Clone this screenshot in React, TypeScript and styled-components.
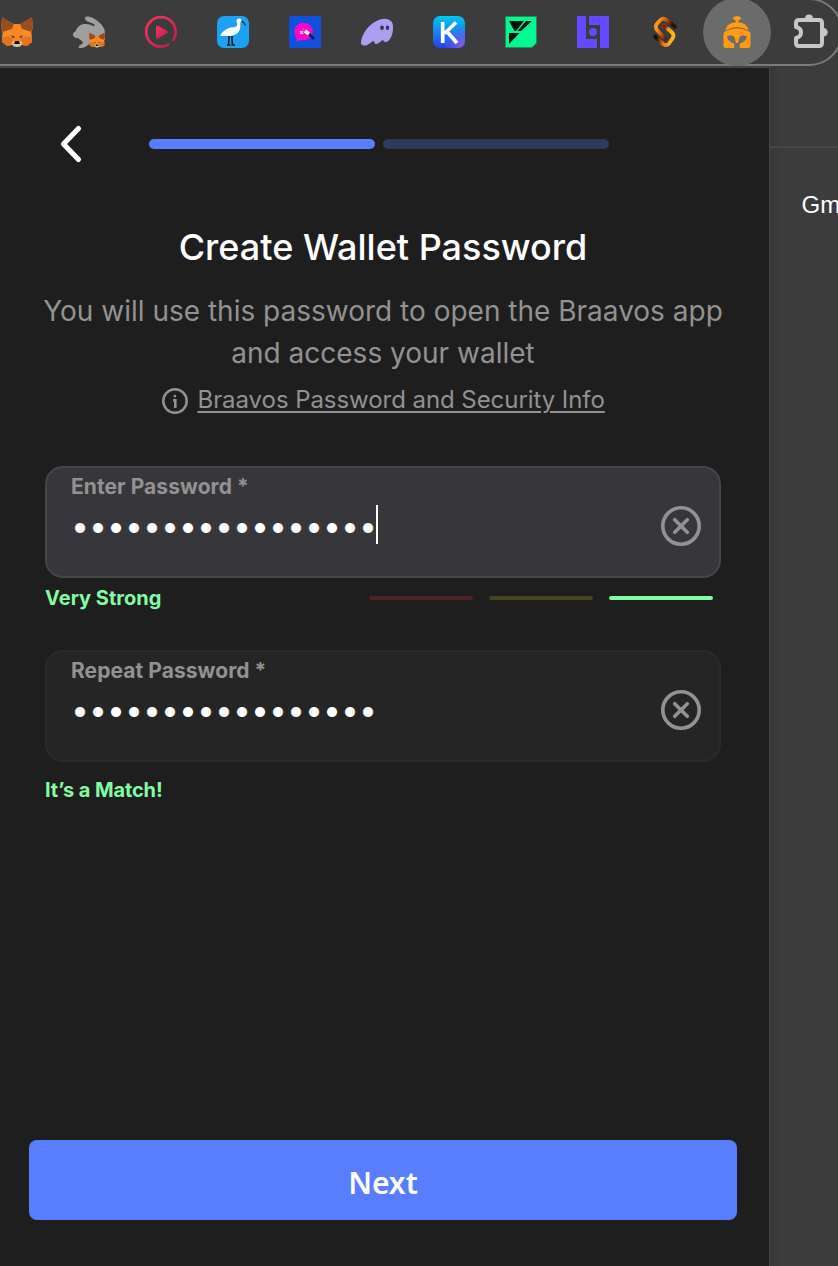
import React from "react";
import styled, { createGlobalStyle } from "styled-components";

const Global = createGlobalStyle`
  * { box-sizing: border-box; }
  html, body { margin: 0; background: #3c3c3c; }
  body { font-family: Inter, "Liberation Sans", sans-serif; color: #fff; }
`;

const Page = styled.div`
  width: 838px;
  height: 1266px;
  overflow: hidden;
  display: flex;
  flex-direction: column;
  background: #3c3c3c;
`;

const ToolbarClip = styled.header`
  height: 67px;
  flex: none;
  overflow: hidden;
`;

const Toolbar = styled.div`
  width: 845px;
  height: 68px;
  margin: -2px 0 0 -2px;
  border: 2px solid #7b7b7b;
  border-radius: 0 34px 34px 0;
  display: flex;
  align-items: center;
  gap: 40px;
  padding-left: 1px;
`;

const Extension = styled.div<{ $active?: boolean }>`
  flex: none;
  display: flex;
  align-items: center;
  justify-content: center;
  width: ${(p) => (p.$active ? 68 : 32)}px;
  height: ${(p) => (p.$active ? 68 : 32)}px;
  margin: ${(p) => (p.$active ? "-2px -18px" : "0")};
  border-radius: ${(p) => (p.$active ? "50%" : "0")};
  background: ${(p) => (p.$active ? "#6b6b6b" : "transparent")};
  svg { display: block; flex: none; overflow: visible; }
`;

const ExtensionsMenu = styled(Extension)`
  margin-left: 2px;
`;

const Body = styled.div`
  flex: 1;
  display: flex;
`;

const Popup = styled.main`
  width: 770px;
  flex: none;
  display: flex;
  flex-direction: column;
  background: #1e1e1e;
  border-top: 1px solid #484848;
  border-right: 1px solid #484848;
`;

const Behind = styled.aside`
  flex: 1;
  overflow: hidden;
  background: linear-gradient(to right, #373737, #3c3c3c 10px);
`;

const BehindBar = styled.div`
  height: 81px;
  border-bottom: 2px solid #464646;
`;

const BehindLink = styled.div`
  padding: 43px 0 0 31.5px;
  font: 24px/28px "Liberation Sans", Arial, sans-serif;
  white-space: nowrap;
`;

const StepHeader = styled.div`
  display: flex;
  align-items: center;
  height: 40px;
  margin-top: 56px;
  padding-left: 58px;
`;

const Steps = styled.div`
  display: flex;
  gap: 8px;
  margin-left: 65px;
`;

const Step = styled.div<{ $done?: boolean }>`
  width: 226px;
  height: 10px;
  border-radius: 5px;
  background: ${(p) => (p.$done ? "#587eff" : "#2f395c")};
`;

const Title = styled.h1`
  margin: 61px 0 0 -3px;
  font-size: 36px;
  line-height: 44px;
  font-weight: 500;
  text-align: center;
`;

const Lead = styled.p`
  margin: 21px 0 0 -3px;
  font-size: 28px;
  line-height: 42px;
  font-weight: 400;
  text-align: center;
  color: #929292;
`;

const InfoLine = styled.div`
  display: flex;
  align-items: center;
  height: 32px;
  margin-top: 10px;
  padding-left: 162px;
  gap: 9.5px;
  color: #929292;
  svg { display: block; position: relative; top: 1px; }
`;

const InfoLink = styled.a`
  font-size: 24px;
  line-height: 32px;
  letter-spacing: -0.06px;
  text-decoration: underline;
  text-decoration-thickness: 2px;
  text-underline-offset: 3px;
`;

const Form = styled.div`
  padding: 0 48px 0 45px;
  margin-top: 50px;
`;

const Field = styled.div<{ $focus?: boolean }>`
  width: 676px;
  height: 112px;
  border-radius: 18px;
  border: 2px solid ${(p) => (p.$focus ? "#464646" : "#2a2a2a")};
  background: ${(p) => (p.$focus ? "#37363b" : "#252525")};
  display: flex;
  align-items: center;
  justify-content: space-between;
  padding: 0 18px 0 24px;
  color: #929292;
  > svg { margin-top: 8px; }
`;

const FieldText = styled.div`
  align-self: flex-start;
  padding-top: 5px;
`;

const Label = styled.div`
  font-size: 21px;
  line-height: 28px;
  font-weight: 700;
  letter-spacing: 0.06px;
`;

const Value = styled.div`
  display: flex;
  align-items: center;
  height: 39px;
  margin-top: 4px;
  color: #fff;
`;

const Bullets = styled.span`
  display: flex;
  width: 305px;
  padding-top: 2px;
  font: 32px/39px Inter, sans-serif;
`;

const Bullet = styled.span`
  width: 18px;
  flex: none;
  display: flex;
  justify-content: center;
`;

const Caret = styled.span`
  width: 2px;
  height: 39px;
  background: #fff;
`;

const Strength = styled.div`
  display: flex;
  align-items: center;
  justify-content: space-between;
  height: 40px;
  padding-right: 8px;
  margin-bottom: 32px;
`;

const Status = styled.div`
  font-size: 20px;
  line-height: 28px;
  font-weight: 700;
  color: #83fba1;
`;

const Meter = styled.div`
  display: flex;
  gap: 16px;
`;

const MeterBar = styled.div<{ $color: string }>`
  width: 104px;
  height: 4px;
  border-radius: 2px;
  background: ${(p) => p.$color};
`;

const Match = styled(Status)`
  margin-top: 14px;
  letter-spacing: -0.1px;
`;

const NextButton = styled.button`
  width: 708px;
  height: 80px;
  margin: auto 0 46px 29px;
  border: 0;
  border-radius: 8px;
  background: #587eff;
  color: #fff;
  font: 600 30px/40px "Noto Sans", sans-serif;
  padding: 6px 0 0;
`;

const FoxShapes = () => (
  <>
    <path d="M1 2 13 8H19L31 2 32 11 30 18 31 26 26 30 20 29H12L6 30 1 26 2 18 0 11Z" fill="#f38120" />
    <path d="M1 1 13 8 11 13 2 16 0 11ZM31 1 19 8 21 13 30 16 32 11Z" fill="#984e22" />
    <path d="M13 8H19L21 14 20 25H12L11 14Z" fill="#fb8521" />
    <path d="M2 16 11 13 12 20 1 21ZM30 16 21 13 20 20 31 21Z" fill="#f98b28" />
    <path d="M1 21 10 21 12 25 6 30 1 26ZM31 21 22 21 20 25 26 30 31 26Z" fill="#e2731f" />
    <path d="M10 19 14 21 12 22ZM22 19 18 21 20 22Z" fill="#443329" />
    <path d="M11 26 13 25H19L21 26 20 30 17 31H15L12 30Z" fill="#d5c3b2" />
    <path d="M14 25H18L19 28H13Z" fill="#15161a" />
  </>
);

const Fox = () => (
  <svg width="32" height="32" viewBox="0 0 32 32"><FoxShapes /></svg>
);

const Rabbit = () => (
  <svg width="32" height="32" viewBox="0 0 32 32">
    <path d="M12 2C12 0 16 0 20 2 27 6 32 11 32 17V24H18C18 27 14 31 9 32H6C5 31 6 29 9 28 10 27 10 26 9 25 7 24 6 22 4 22 1 22 0 20 0 18.500 0 17 1 16 2.500 15.500 4 10.500 8 8 12 8 16 8 18 8.800 20.500 10.300L22 9C20 7.200 17 6.500 14.500 5.500 12.500 4.500 12 3.500 12 2Z" fill="#9f9f9f" />
    <g transform="translate(16 16) scale(.5)"><FoxShapes /></g>
  </svg>
);

const Play = () => (
  <svg width="32" height="32" viewBox="0 0 32 32">
    <defs>
      <linearGradient id="play" x1="0" y1="0" x2="1" y2="1">
        <stop stopColor="#fc3360" /><stop offset="1" stopColor="#b31f50" />
      </linearGradient>
    </defs>
    <path d="M24 28.300A14.700 14.700 0 1 1 29 23.500" transform="translate(-.7 .3)" fill="none" stroke="url(#play)" strokeWidth="2.800" strokeLinecap="round" />
    <path d="M11 11.300Q11 8.600 13.500 10L22 14.700Q24 16 22 17.200L13.500 22.200Q11 23.600 11 21Z" fill="url(#play)" />
  </svg>
);

const Ibis = () => (
  <svg width="32" height="32" viewBox="0 0 32 32">
    <rect width="32" height="32" rx="7" fill="#1da1f2" />
    <path d="M3 20C6 14 12 11 18 11 20.500 10 20.500 9 20 7 18.500 4 21 1.500 24 3 25 4 25 5 24 6 22.500 7 24 9 23 13 21.500 17.500 18 19.500 13 20 10 20 6 20 3 20Z" fill="#fff" />
    <path d="M24.500 5Q27 6 28.500 9.500" fill="none" stroke="#14354d" strokeWidth="1.400" />
    <path d="M12 20V23L11.500 28.500M15 20V23L15.500 28.500M10 29H13.500M14.500 29H18" fill="none" stroke="#0c1822" strokeWidth="1.600" />
  </svg>
);

const Chat = () => (
  <svg width="32" height="32" viewBox="0 0 32 32">
    <rect width="32" height="32" fill="#1050dc" />
    <path d="M7 25C8 23 7 22 6.500 20A9.300 8.800 0 1 1 12 24C10 25 9 25 7 25Z" fill="#fc04c9" />
    <path d="m11 15 3 3m0-3-3 3" stroke="#ffc0f0" strokeWidth="1.600" />
    <circle cx="14.500" cy="13" r=".8" fill="#fd89df" />
    <path d="m19 17 6 6" stroke="#19195a" strokeWidth="3" />
    <path d="m16 15 4 3" stroke="#fff" strokeWidth="3.500" />
  </svg>
);

const Ghost = () => (
  <svg width="32" height="32" viewBox="0 0 32 32">
    <path d="M0 27C0 19 8 7 19 3.500 27 1 33 5 32 12 32 19 29 25 25 26 23 26.500 22.500 24 21.500 24 19 26 17 28 15 28 13 28 13.500 25 12.500 25 10 26 7 30 3 29.500 1 29 0 28.500 0 27Z" fill="#ab9ff2" />
    <ellipse cx="21" cy="11.700" rx="1.900" ry="2.200" fill="#3c315b" />
    <ellipse cx="26.500" cy="11.700" rx="1.700" ry="2.200" fill="#3c315b" />
  </svg>
);

const KeplrMark = () => (
  <svg width="32" height="32" viewBox="0 0 32 32">
    <defs>
      <linearGradient id="k1" x1="0" y1="0" x2="0" y2="1">
        <stop stopColor="#00c7f2" /><stop offset="1" stopColor="#2840e5" />
      </linearGradient>
      <radialGradient id="k2" cx="1" cy="1" r=".7">
        <stop stopColor="#9a5ce5" /><stop offset="1" stopColor="#7a60ec" stopOpacity="0" />
      </radialGradient>
    </defs>
    <rect width="32" height="32" rx="7" fill="url(#k1)" />
    <rect width="32" height="32" rx="7" fill="url(#k2)" />
    <path d="M9.700 6V27M23 6.500 11.500 17.500M13 14.500 24 27" fill="none" stroke="#fff" strokeWidth="3.700" />
  </svg>
);

const GreenMark = () => (
  <svg width="32" height="32" viewBox="0 0 32 32">
    <path d="M1 .5H31.500V27L27 31.500H.5V.5Z" fill="#00fa92" stroke="#238653" strokeWidth=".6" />
    <path d="M4 5H19L11 15H9.500ZM21 5H27L16 15H12.500ZM4 17H14.500L4 28Z" fill="#04130e" />
  </svg>
);

const PurpleMark = () => (
  <svg width="32" height="32" viewBox="0 0 32 32">
    <path d="M0 0H9V23H20V32H0ZM12 0H32V32H23V9H12Z" fill="#624bff" />
    <circle cx="16" cy="16" r="4" fill="#624bff" />
  </svg>
);

const OrangeMark = () => (
  <svg width="32" height="32" viewBox="0 0 32 32">
    <defs>
      <linearGradient id="s1" x1="0" y1="0" x2="1" y2=".35">
        <stop offset=".2" stopColor="#ff9412" /><stop offset=".5" stopColor="#c65506" /><stop offset=".85" stopColor="#2a1307" />
      </linearGradient>
      <linearGradient id="s2" x1="1" y1=".5" x2="0" y2=".4">
        <stop offset=".1" stopColor="#ffb31a" /><stop offset=".5" stopColor="#ed7b09" /><stop offset=".9" stopColor="#1f0e05" />
      </linearGradient>
    </defs>
    <g fill="none" strokeWidth="3.800" strokeLinecap="round" strokeLinejoin="round">
      <path d="M26 11 17.500 3.800Q14 1.500 11.500 4L7.800 7.800Q5.800 11 8 14L16 22.500" stroke="url(#s1)" />
      <path d="M6 20.500 14 28Q17.500 30.500 20 27.500L23.500 22.500Q25.500 19.500 23.500 17L19 13" stroke="url(#s2)" />
    </g>
    <circle cx="15" cy="10" r="2" fill="#4b1907" stroke="#b93909" />
  </svg>
);

const Helmet = () => (
  <svg width="32" height="32" viewBox="0 0 32 32">
    <g fill="#ff9c12">
      <path d="M11.500 2Q16-2 20.500 2L17.200 5V6.200C23 6.500 27 10 27.500 14.500Q16 7.500 4.500 14.500C5 10 9 6.500 14.800 6.200V5Z" />
      <path d="M3.500 15.800Q16 8.500 28.500 15.800Q29.500 16.500 29.500 18.500V29.500Q29.500 32 27 32H18.800V27.500C22.500 26.500 25.500 24 26 20.200 22.500 19 19.500 19.500 18.500 21.500L17 27H15L13.500 21.500C12.500 19.500 9.500 19 6 20.200 6.500 24 9.500 26.500 13.200 27.500V32H5Q2.500 32 2.500 29.500V18.500Q2.500 16.500 3.500 15.800Z" />
    </g>
  </svg>
);

const Puzzle = () => (
  <svg width="36" height="36" viewBox="0 0 36 36">
    <path d="M6 6H26Q29 6 29 9V29Q29 32 26 32H6Q3 32 3 29V24Q8 23 8 18.500 8 14 3 13V9Q3 6 6 6Z" fill="none" stroke="#c7c7c7" strokeWidth="4" strokeLinejoin="round" />
    <path d="M12 5.500V4.500A4 4 0 0 1 20 4.500V5.500ZM30 14H30.500A4.200 4.200 0 0 1 30.500 22.500H30Z" fill="#c7c7c7" />
  </svg>
);

const ClearIcon = () => (
  <svg width="40" height="40" viewBox="0 0 40 40" fill="none" stroke="#929292" strokeLinecap="round">
    <circle cx="20" cy="20" r="18.200" strokeWidth="3.600" />
    <path d="m13.700 13.700 12.600 12.600m0-12.600L13.700 26.300" strokeWidth="3.600" />
  </svg>
);

const BackIcon = () => (
  <svg width="26" height="40" viewBox="0 0 26 40" fill="none">
    <path d="M20.500 4.500 5.500 20l15 15.500" stroke="#fff" strokeWidth="5.200" strokeLinecap="round" strokeLinejoin="round" />
  </svg>
);

const InfoIcon = () => (
  <svg width="26" height="26" viewBox="0 0 26 26" fill="none" stroke="#929292">
    <circle cx="13" cy="13" r="11.700" strokeWidth="2.500" />
    <path d="M11 12.300H13.300V20" strokeWidth="2.600" />
    <circle cx="12.900" cy="8.200" r=".6" strokeWidth="1.600" />
  </svg>
);

const PASSWORD_LENGTH = 17;
const ICONS = [Fox, Rabbit, Play, Ibis, Chat, Ghost, KeplrMark, GreenMark, PurpleMark, OrangeMark];

const PasswordField = ({ label, focus }: { label: string; focus?: boolean }) => (
  <Field $focus={focus}>
    <FieldText>
      <Label>{label}</Label>
      <Value>
        <Bullets>
          {Array.from({ length: PASSWORD_LENGTH }, (_, i) => <Bullet key={i}>•</Bullet>)}
        </Bullets>
        {focus && <Caret />}
      </Value>
    </FieldText>
    <ClearIcon />
  </Field>
);

export default function App() {
  return (
    <Page>
      <Global />
      <ToolbarClip>
        <Toolbar>
          {ICONS.map((Icon, i) => <Extension key={i}><Icon /></Extension>)}
          <Extension $active><Helmet /></Extension>
          <ExtensionsMenu><Puzzle /></ExtensionsMenu>
        </Toolbar>
      </ToolbarClip>
      <Body>
        <Popup>
          <StepHeader>
            <BackIcon />
            <Steps><Step $done /><Step /></Steps>
          </StepHeader>
          <Title>Create Wallet Password</Title>
          <Lead>You will use this password to open the Braavos app<br />and access your wallet</Lead>
          <InfoLine>
            <InfoIcon />
            <InfoLink>Braavos Password and Security Info</InfoLink>
          </InfoLine>
          <Form>
            <PasswordField label="Enter Password *" focus />
            <Strength>
              <Status>Very Strong</Status>
              <Meter>
                <MeterBar $color="#4b2423" />
                <MeterBar $color="#484320" />
                <MeterBar $color="#83fba1" />
              </Meter>
            </Strength>
            <PasswordField label="Repeat Password *" />
            <Match>It’s a Match!</Match>
          </Form>
          <NextButton>Next</NextButton>
        </Popup>
        <Behind>
          <BehindBar />
          <BehindLink>Gm</BehindLink>
        </Behind>
      </Body>
    </Page>
  );
}
